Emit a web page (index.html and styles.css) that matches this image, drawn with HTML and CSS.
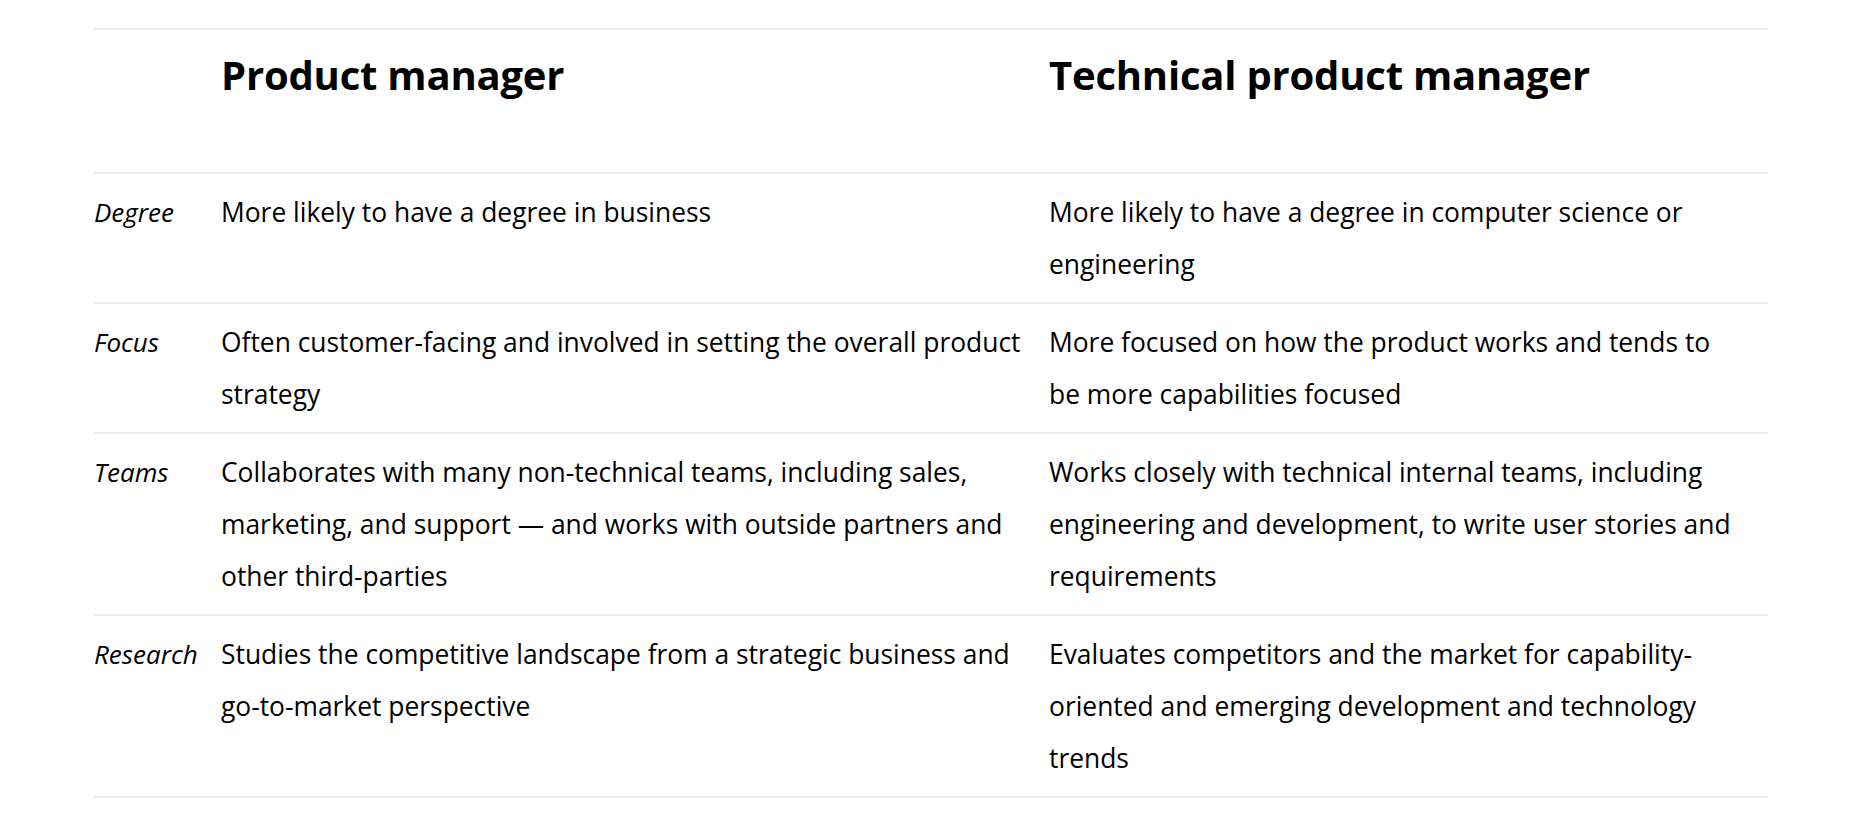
FILE: index.html
```html
<!DOCTYPE html>
<html lang="en">
<head>
<meta charset="utf-8">
<title>Product manager vs Technical product manager</title>
<link rel="stylesheet" href="styles.css">
</head>
<body>
<div class="compare">
  <div class="row head">
    <div class="label"></div>
    <div class="cell"><h2>Product manager</h2></div>
    <div class="cell"><h2>Technical product manager</h2></div>
  </div>
  <div class="row">
    <div class="label">Degree</div>
    <div class="cell">More likely to have a degree in business</div>
    <div class="cell">More likely to have a degree in computer science or engineering</div>
  </div>
  <div class="row">
    <div class="label">Focus</div>
    <div class="cell">Often customer-facing and involved in setting the overall product strategy</div>
    <div class="cell">More focused on how the product works and tends to be more capabilities focused</div>
  </div>
  <div class="row">
    <div class="label">Teams</div>
    <div class="cell">Collaborates with many non-technical teams, including sales, marketing, and support — and works with outside partners and other third-parties</div>
    <div class="cell">Works closely with technical internal teams, including engineering and development, to write user stories and requirements</div>
  </div>
  <div class="row last">
    <div class="label">Research</div>
    <div class="cell">Studies the competitive landscape from a strategic business and go-to-market perspective</div>
    <div class="cell">Evaluates competitors and the market for capability-oriented and emerging development and technology trends</div>
  </div>
</div>
</body>
</html>
```

FILE: styles.css
```css
html, body {
  margin: 0;
  padding: 0;
  background: #ffffff;
}

body {
  font-family: "Open Sans", "Noto Sans", sans-serif;
  color: #000000;
  font-size: 26.4px;
  line-height: 52px;
}

.compare {
  margin: 28px 0 0 94px;
  width: 1674px;
}

.row {
  display: grid;
  grid-template-columns: 127px 828px 719px;
  border-top: 2px solid #ececec;
  padding: 12px 0;
}

.row.last {
  border-bottom: 2px solid #ececec;
}

.row.head {
  padding: 18px 0 70px;
}

.label {
  font-style: italic;
  font-size: 26px;
}

.cell {
  padding-right: 18px;
}

.cell + .cell {
  padding-right: 24px;
}

h2 {
  margin: 0;
  font-size: 40px;
  font-weight: 700;
  line-height: 54px;
  letter-spacing: -0.2px;
}
```
